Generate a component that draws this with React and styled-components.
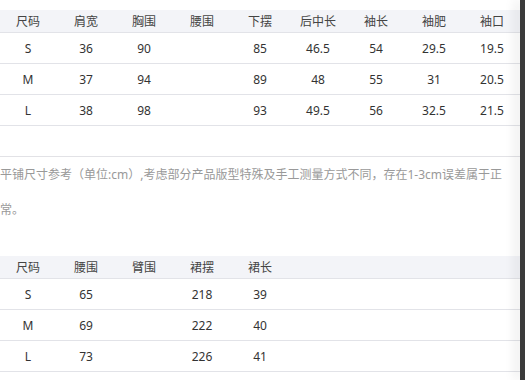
import React from "react";
import styled, { createGlobalStyle } from "styled-components";

const GlobalStyle = createGlobalStyle`
  html, body {
    margin: 0;
    padding: 0;
    background: #fff;
  }
  body {
    font-family: "Noto Sans", "Noto Sans CJK SC", sans-serif;
    font-size: 12px;
    color: #333;
  }
`;

const topHead = ["尺码", "肩宽", "胸围", "腰围", "下摆", "后中长", "袖长", "袖肥", "袖口"];
const topRows = [
  ["S", "36", "90", "", "85", "46.5", "54", "29.5", "19.5"],
  ["M", "37", "94", "", "89", "48", "55", "31", "20.5"],
  ["L", "38", "98", "", "93", "49.5", "56", "32.5", "21.5"],
];

const bottomHead = ["尺码", "腰围", "臂围", "裙摆", "裙长"];
const bottomRows = [
  ["S", "65", "", "218", "39"],
  ["M", "69", "", "222", "40"],
  ["L", "73", "", "226", "41"],
];

const SizeTable = ({ head, rows }) => (
  <Table>
    <Row $head>
      {head.map((h, i) => (
        <Cell key={i} $head>{h}</Cell>
      ))}
    </Row>
    {rows.map((r, i) => (
      <Row key={i}>
        {r.map((c, j) => (
          <Cell key={j}>{c}</Cell>
        ))}
      </Row>
    ))}
  </Table>
);

const App = () => {
  return (
    <Page>
      <GlobalStyle />
      <Content>
        <SizeTable head={topHead} rows={topRows} />
        <Divider />
        <Note>
          平铺尺寸参考（单位:cm）,考虑部分产品版型特殊及手工测量方式不同，存在1-3cm误差属于正
          <br />
          常。
        </Note>
        <SizeTable head={bottomHead} rows={bottomRows} />
      </Content>
      <Edge />
    </Page>
  );
};

const Page = styled.div`
  display: flex;
  width: 525px;
  height: 380px;
  overflow: hidden;
`;

const Content = styled.div`
  flex: 1;
  padding-top: 10px;
  overflow: hidden;
`;

const Edge = styled.div`
  width: 5px;
  flex-shrink: 0;
  background: #3b3b3b;
  box-shadow: -4px 0 12px rgba(0, 0, 0, 0.12);
`;

const Table = styled.div`
  display: flex;
  flex-direction: column;
`;

const Row = styled.div`
  display: flex;
  height: ${(p) => (p.$head ? "22px" : "30px")};
  background: ${(p) => (p.$head ? "#f3f4f8" : "#fff")};
  border-bottom: 1px solid #e2e3e8;
  margin-left: -1px;
`;

const Cell = styled.div`
  width: 58px;
  flex-shrink: 0;
  display: flex;
  align-items: center;
  justify-content: center;
  font-size: 12px;
  color: ${(p) => (p.$head ? "#444" : "#333")};
`;

const Divider = styled.div`
  height: 1px;
  background: #e2e2e6;
  margin-top: 30px;
`;

const Note = styled.p`
  margin: 0 0 29px;
  font-size: 12px;
  line-height: 35px;
  color: #999;
  white-space: nowrap;
`;

export default App;
